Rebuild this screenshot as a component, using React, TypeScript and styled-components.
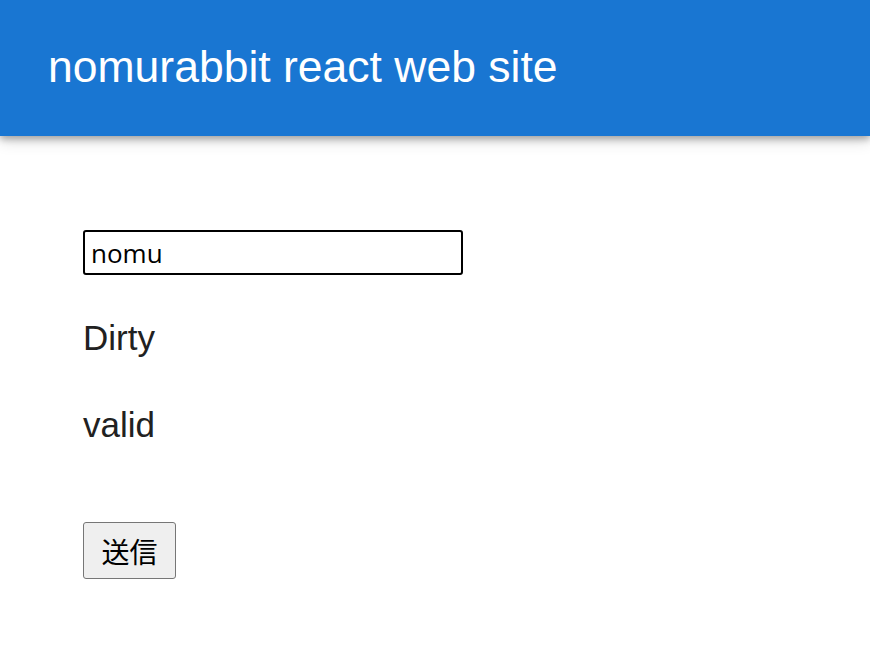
import React from 'react';
import styled, { createGlobalStyle } from 'styled-components';

const GlobalStyle = createGlobalStyle`
  html, body {
    margin: 0;
    padding: 0;
    background: #ffffff;
    font-family: "Liberation Sans", Arial, sans-serif;
  }
`;

const AppBar = styled.header`
  background: #1976d2;
  color: #ffffff;
  height: 136px;
  display: flex;
  align-items: center;
  padding: 0 48px 2px;
  box-sizing: border-box;
  box-shadow: 0 3px 7px rgba(0, 0, 0, 0.3), 0 6px 14px rgba(0, 0, 0, 0.12);
`;

const Title = styled.h1`
  margin: 0;
  font-size: 44.5px;
  font-weight: 400;
  line-height: 1;
`;

const Main = styled.main`
  padding: 94px 83px 0;
`;

const Form = styled.form`
  display: flex;
  flex-direction: column;
  align-items: flex-start;
`;

const TextInput = styled.input`
  box-sizing: border-box;
  width: 380px;
  height: 45px;
  padding: 0 6px;
  border: 2px solid #000000;
  border-radius: 3px;
  font-family: "Open Sans", "Noto Sans", sans-serif;
  font-size: 26px;
  color: #000000;
  caret-color: #000000;
  outline: none;
`;

const Status = styled.p<{ $gap: number }>`
  margin: ${({ $gap }) => $gap}px 0 0;
  font-size: 35px;
  color: #212121;
  line-height: 1;
`;

const SubmitButton = styled.button`
  margin-top: 80px;
  box-sizing: border-box;
  width: 93px;
  height: 57px;
  padding: 0;
  background: #efefef;
  border: 1px solid #767676;
  border-radius: 3px;
  font-family: "Noto Sans CJK JP", sans-serif;
  font-size: 28px;
  color: #000000;
`;

const App: React.FC = () => {
  return (
    <>
      <GlobalStyle />
      <AppBar>
        <Title>nomurabbit react web site</Title>
      </AppBar>
      <Main>
        <Form onSubmit={(e) => e.preventDefault()}>
          <TextInput type="text" defaultValue="nomu" autoFocus />
          <Status $gap={45}>Dirty</Status>
          <Status $gap={52}>valid</Status>
          <SubmitButton type="submit">送信</SubmitButton>
        </Form>
      </Main>
    </>
  );
};

export default App;
